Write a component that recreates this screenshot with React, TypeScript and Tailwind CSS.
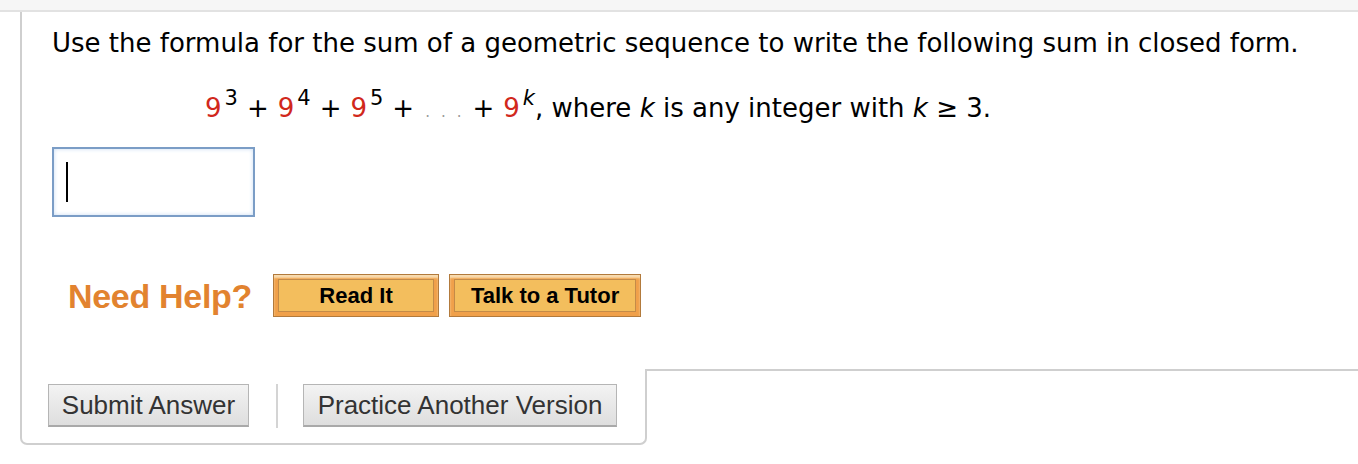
import React from 'react';

const sans = { fontFamily: '"DejaVu Sans", Verdana, sans-serif' };
const arial = { fontFamily: '"Liberation Sans", Arial, sans-serif' };

function Pow({ exp, italic }: { exp: string; italic?: boolean }) {
  return (
    <span>
      <span className="text-[#d1281c]">9</span>
      <sup className={`top-[-0.55em] text-[21px] ml-[3px] ${italic ? 'italic' : ''}`}>{exp}</sup>
    </span>
  );
}

function Plus() {
  return <span className="mx-[9px]">+</span>;
}

export default function App() {
  return (
    <div className="w-[1358px] h-[464px] bg-white overflow-hidden">
      {/* top strip */}
      <div className="h-[12px] bg-[#f6f6f6] border-b-2 border-[#e2e2e2]" />

      <div className="ml-[20px]">
        {/* question body */}
        <div className="border-l-2 border-[#cfcfcf] pl-[30px] pt-[16px] pb-[54px]" style={sans}>
          <p className="text-[26px] leading-[30px] text-black whitespace-nowrap">
            Use the formula for the sum of a geometric sequence to write the following sum in closed form.
          </p>

          <p className="mt-[35px] pl-[153px] text-[26px] leading-[30px] text-black whitespace-nowrap">
            <Pow exp="3" />
            <Plus />
            <Pow exp="4" />
            <Plus />
            <Pow exp="5" />
            <Plus />
            <span className="ml-[2px] text-[#9a9a9a] text-[15px] tracking-[11px]">...</span>
            <span className="mr-[9px]">+</span>
            <Pow exp="k" italic />, where <span className="italic">k</span> is any integer with{' '}
            <span className="italic">k</span> ≥ 3.
          </p>

          {/* answer box */}
          <div className="mt-[20px] w-[203px] h-[70px] border-2 border-[#7b9dc6] bg-white shadow-[inset_0_0_4px_#c9dcf3] flex items-center pl-[12px]">
            <div className="w-[2px] h-[40px] bg-black" />
          </div>

          {/* help row */}
          <div className="mt-[57px] flex items-center pl-[16px]" style={arial}>
            <span className="text-[34px] font-bold text-[#e2832f] leading-none mr-[21px] -tracking-[0.3px]">Need Help?</span>
            <button className="w-[166px] h-[43px] bg-[#f0a04a] border border-[#b27a3c] p-[4px] mr-[10px] shadow-[inset_0_3px_2px_#f8dcb0]">
              <div className="h-full border border-[#c48b48] bg-[#f3be5d] flex items-center justify-center text-[22px] font-bold text-black">
                Read It
              </div>
            </button>
            <button className="w-[192px] h-[43px] bg-[#f0a04a] border border-[#b27a3c] p-[4px] shadow-[inset_0_3px_2px_#f8dcb0]">
              <div className="h-full border border-[#c48b48] bg-[#f3be5d] flex items-center justify-center text-[22px] font-bold text-black">
                Talk to a Tutor
              </div>
            </button>
          </div>
        </div>

        {/* bottom actions */}
        <div className="flex items-start">
          <div
            className="w-[627px] h-[76px] border-l-2 border-b-2 border-r-2 border-[#cfcfcf] rounded-b-[7px] flex items-start pt-[15px] pl-[26px] -mt-[2px]"
            style={arial}
          >
            <button className="w-[201px] h-[43px] bg-gradient-to-b from-[#f3f3f3] to-[#dedede] border border-[#b5b5b5] border-b-2 border-b-[#a9a9a9] text-[26px] text-[#333]">
              Submit Answer
            </button>
            <div className="w-[2px] h-[44px] bg-[#d4d4d4] ml-[27px] mr-[25px]" />
            <button className="w-[314px] h-[43px] bg-gradient-to-b from-[#f3f3f3] to-[#dedede] border border-[#b5b5b5] border-b-2 border-b-[#a9a9a9] text-[26px] text-[#333]">
              Practice Another Version
            </button>
          </div>
          <div className="flex-1 border-t-2 border-[#cfcfcf] -mt-[2px]" />
        </div>
      </div>
    </div>
  );
}
